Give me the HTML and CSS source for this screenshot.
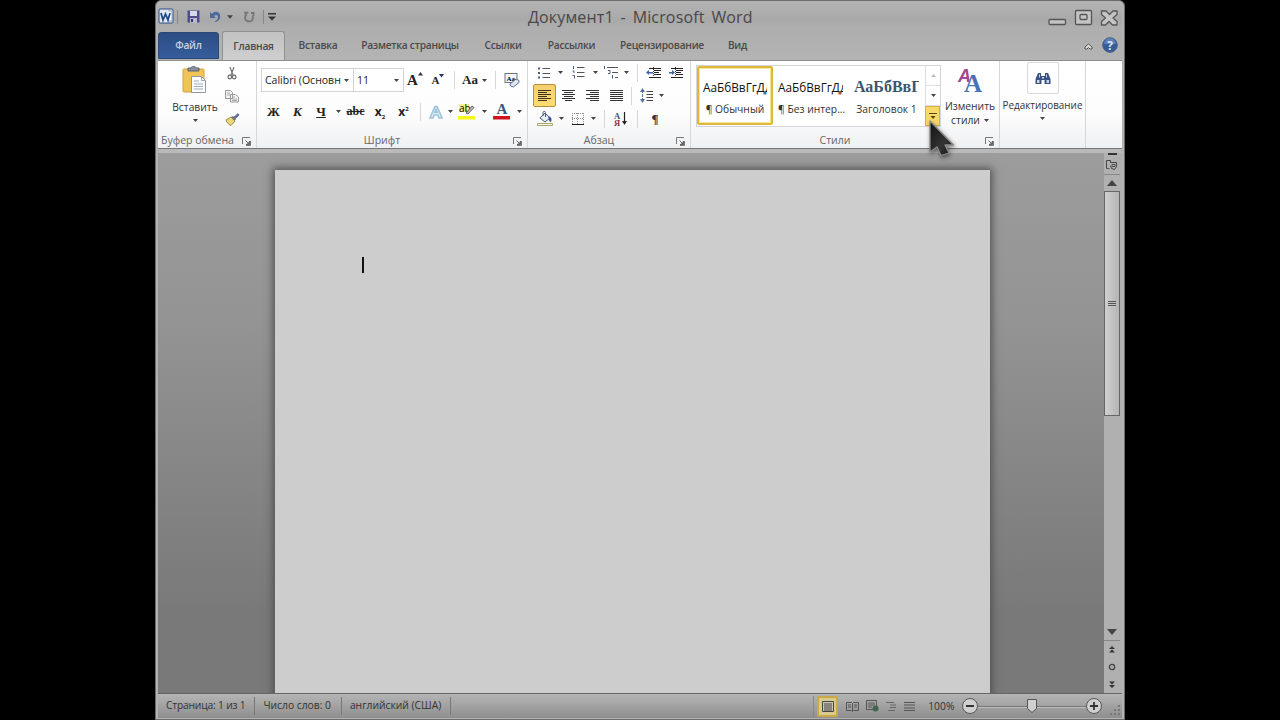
FILE: index.html
```html
<!DOCTYPE html>
<html lang="ru">
<head>
    <meta charset="utf-8">
    <title>Документ1 - Microsoft Word</title>
    <link rel="stylesheet" href="styles.css">
</head>
<body>
<svg class="defs">
    <symbol id="arrow" viewBox="0 0 5 3"><path d="M0 0h5L2.5 3z" fill="#444"/></symbol>
    <symbol id="launcher" viewBox="0 0 9 9"><path d="M.5 7V.5H8M4 8.500h4.500V4" fill="none" stroke="#777"/><path d="M3.500 3.500l4 4M7.500 4v3.500H4" stroke="#666" fill="#888"/></symbol>
</svg>

<div class="window">
    <div class="titlebar">
        <div class="quick">
            <svg width="17" height="17" viewBox="0 0 17 17"><rect x="1" y="1" width="14" height="14" rx="1" fill="#dfe8f2" stroke="#2e4f82"/><path d="M10 3h4v10h-4" fill="#fff" stroke="#8da3c0"/><path d="M3 5l2 7 2.500-6L10 12l2-7" fill="none" stroke="#1f4a8a" stroke-width="1.800"/></svg>
            <i class="qsep"></i>
            <svg class="save" width="13" height="13" viewBox="0 0 13 13"><path d="M.5.5h12v12h-12z" fill="#4f4c8c"/><path d="M3 1h7v5H3z" fill="#d6d9e8"/><path d="M3 8h7v5H3z" fill="#b9b9ce"/><path d="M4 9h2v3H4z" fill="#34316b"/></svg>
            <svg class="undo" width="12" height="12" viewBox="0 0 12 12"><path d="M1 1v6h6L5 5c2-2 4-1 4 1 0 2-2 4-4 5 4 0 7-3 6-7C10 0 5 0 3 3z" fill="#4d679f"/></svg>
            <svg class="dd" width="6" height="4"><use href="#arrow"/></svg>
            <svg class="redo" width="12" height="12" viewBox="0 0 12 12"><path d="M2.500 4C1 8 3 10.500 6 10.500S11 8 9.500 4.500M3 1v4.500M1 1.700h4.500M8 2h2.500v3" fill="none" stroke="#777" stroke-width="1.800"/></svg>
            <i class="qsep"></i>
            <svg width="8" height="8" viewBox="0 0 8 8"><path d="M0 0h8v1.500H0zM0 3.500h8L4 7.500z" fill="#333"/></svg>
        </div>
        <div class="title">Документ1 - Microsoft Word</div>
        <svg class="winbtns" width="71" height="18" viewBox="0 0 71 18">
            <g fill="#c4c4c4" stroke="#555" stroke-width="1.300">
                <rect x="1" y="10.500" width="16.500" height="5" rx="1"/>
                <rect x="27.500" y="1.500" width="16" height="14" rx="1"/>
                <rect x="32" y="5.500" width="7" height="5" rx="1"/>
                <path d="M53.500 2h4.500l3.500 3.500L65 2h4v3.500l-4 3.500 4 3.500V16h-4.500L61 12.500 57.500 16h-4v-3.500l4-3.500-4-3.500z" stroke-linejoin="round"/>
            </g>
        </svg>
    </div>

    <div class="tabs">
        <div class="tab file">Файл</div>
        <div class="tab active">Главная</div>
        <div class="tab t-ins">Вставка</div>
        <div class="tab t-lay">Разметка страницы</div>
        <div class="tab t-ref">Ссылки</div>
        <div class="tab t-mail">Рассылки</div>
        <div class="tab t-rev">Рецензирование</div>
        <div class="tab t-view">Вид</div>
        <svg class="collapse" width="9" height="7" viewBox="0 0 9 7"><path d="M1 4l3.500-3L8 4v2H6L4.500 4.500 3 6H1z" fill="#ddd" stroke="#555"/></svg>
        <svg class="help" width="16" height="16" viewBox="0 0 16 16"><circle cx="8" cy="8" r="7.300" fill="#355c98" stroke="#44608c"/><path d="M2 7a6 6 0 0 1 12 0z" fill="#5c80b4"/><text x="8" y="12.500" text-anchor="middle" class="q">?</text></svg>
    </div>

    <div class="ribbon">
        <div class="group clipboard">
            <div class="body">
                <div class="paste">
                    <svg width="26" height="28" viewBox="0 0 26 28"><rect x="1" y="3" width="21" height="23" rx="1" fill="#f0c457" stroke="#d5a43a"/><path d="M6 5V2h3c0-2 5-2 5 0h3v3z" fill="#8a8f98" stroke="#5d6470"/><path d="M9.500 10.500h10l4 4v12h-14z" fill="#fff" stroke="#8c97a8"/><path d="M19.500 10.500v4h4M12 15h5M12 18h9M12 20.500h9M12 23h9" fill="none" stroke="#9aa9bd"/></svg>
                    <span>Вставить</span>
                    <svg class="dd" width="5" height="3"><use href="#arrow"/></svg>
                </div>
                <div class="mini">
                    <svg width="10" height="13" viewBox="0 0 10 13"><path d="M3 0l3 8M7 0L4 8" stroke="#777" stroke-width="1.200"/><g fill="none" stroke="#666" stroke-width="1.200"><circle cx="2.800" cy="10" r="1.800"/><circle cx="7.200" cy="10" r="1.800"/></g></svg>
                    <svg width="16" height="13" viewBox="0 0 16 13"><g fill="#f4f4f4" stroke="#999"><path d="M1.500.5h5l2 2v6h-7zM6.500 4.500h5l3 2.500v5h-8z"/></g><path d="M3 3h3M3 5h3M8 7h3M8 9h5M8 10.500h5" stroke="#aaa"/></svg>
                    <svg width="15" height="13" viewBox="0 0 15 13"><path d="M1 7l5-3 4 4-4 4.500C4 12 2 10 1 7z" fill="#e9d77c" stroke="#a18d3f"/><path d="M6 4l2-1 3 3-1.500 2z" fill="#777"/><path d="M9 4l4-3.500L14 2l-3.500 3.500z" fill="#5d6fae" stroke="#41507f" stroke-width=".6"/></svg>
                </div>
            </div>
            <div class="caption"><span>Буфер обмена</span><svg width="9" height="9"><use href="#launcher"/></svg></div>
        </div>

        <div class="group font">
            <div class="body">
                <div class="row font-1">
                    <div class="combo">Calibri (Основн<svg width="5" height="3"><use href="#arrow"/></svg></div>
                    <div class="combo size">11<svg width="5" height="3"><use href="#arrow"/></svg></div>
                    <b class="serif grow">A<svg width="5" height="4" viewBox="0 0 5 4"><path d="M0 3.500L2.500 0 5 3.500z" fill="#335"/></svg></b>
                    <b class="serif shrink">A<svg width="5" height="4" viewBox="0 0 5 4"><path d="M0 0h5L2.500 3.500z" fill="#335"/></svg></b>
                    <i class="sep"></i>
                    <b class="serif case">Aa</b>
                    <svg width="5" height="3"><use href="#arrow"/></svg>
                    <i class="sep"></i>
                    <svg width="16" height="15" viewBox="0 0 16 15"><rect x="1" y=".5" width="12" height="9" fill="#f5f7fa" stroke="#66758c"/><text x="2.500" y="7.500" class="tiny">Aa</text><path d="M6 11l6-5 3 1.500v2L9.500 14 6.500 13z" fill="#dfe6f0" stroke="#5f7191"/></svg>
                </div>
                <div class="row font-2">
                    <b class="serif">Ж</b>
                    <b class="serif"><em>К</em></b>
                    <b class="serif"><u>Ч</u></b>
                    <svg width="5" height="3"><use href="#arrow"/></svg>
                    <b class="serif abc"><s>abc</s></b>
                    <b class="script">x<sub>2</sub></b>
                    <b class="script">x<sup>2</sup></b>
                    <i class="sep"></i>
                    <svg width="16" height="16" viewBox="0 0 16 16"><path d="M2 14L7 2.500h2L14 14h-3l-1-3H6l-1 3zM6.800 8.500h2.400L8 5.500z" fill="#eef6fb" stroke="#9cc4dc" stroke-width="1.700"/></svg>
                    <svg width="5" height="3"><use href="#arrow"/></svg>
                    <svg width="18" height="18" viewBox="0 0 18 18"><rect x="1" y="1" width="10" height="8" fill="#f4f48a"/><text x="1" y="9" class="ab">ab</text><path d="M8 10l6-7 2 1.500L10 11z" fill="#bbb" stroke="#444" stroke-width=".8"/><path d="M0 13h17v3.500H0z" fill="#f6f51c"/></svg>
                    <svg width="5" height="3"><use href="#arrow"/></svg>
                    <svg width="18" height="18" viewBox="0 0 18 18"><text x="9" y="11" text-anchor="middle" class="fontcolor">A</text><path d="M0 13h17v3.500H0z" fill="#cf1420"/></svg>
                    <svg width="5" height="3"><use href="#arrow"/></svg>
                </div>
            </div>
            <div class="caption center"><span>Шрифт</span><svg width="9" height="9"><use href="#launcher"/></svg></div>
        </div>

        <div class="group para">
            <div class="body">
                <div class="row para-1">
                    <svg width="13" height="12" viewBox="0 0 13 12"><path d="M0 .5h2v2H0zM0 5h2v2H0zM0 9.500h2v2H0z" fill="#4a5a86"/><path d="M4.500 1.500H12M4.500 6.500H12M4.500 10.500H12" stroke="#555"/></svg>
                    <svg width="5" height="3"><use href="#arrow"/></svg>
                    <svg width="13" height="13" viewBox="0 0 13 13"><path d="M1.500 0v3M.5 5h1.500v2M.5 9.500h2v3" stroke="#4a5a86" fill="none"/><path d="M5 1.500h7.500M5 6.500h7.500M5 10.500h7.500" stroke="#555"/></svg>
                    <svg width="5" height="3"><use href="#arrow"/></svg>
                    <svg width="16" height="13" viewBox="0 0 16 13"><path d="M1.500 0v3M5 4.500h2v3H5M9.500 9v3.500" stroke="#4a5a86" fill="none"/><path d="M4 1.500h11M9 6.500h6M12 11.500h3" stroke="#555"/></svg>
                    <svg width="5" height="3"><use href="#arrow"/></svg>
                    <i class="sep"></i>
                    <svg width="16" height="12" viewBox="0 0 16 12"><path d="M3 1.500h12M8 3.500h7M8 5.500h5M8 7.500h7M3 10.500h12" stroke="#222"/><path d="M0 5.500L3 3v2h4v1.500H3V8z" fill="#3f66a0"/><path d="M7.500 0v12" stroke="#333" stroke-dasharray="1 1"/></svg>
                    <svg width="16" height="12" viewBox="0 0 16 12"><path d="M3 1.500h12M8 3.500h7M8 5.500h5M8 7.500h7M3 10.500h12" stroke="#222"/><path d="M7 5.500L4 3v2H1v1.500h3V8z" fill="#3f66a0"/><path d="M7.500 0v12" stroke="#333" stroke-dasharray="1 1"/></svg>
                </div>
                <div class="row para-2">
                    <span class="pressed"><svg width="13" height="11" viewBox="0 0 13 11"><path d="M0 .5h13M0 2.500h9M0 4.500h13M0 6.500h9M0 8.500h13M0 10.500h9" stroke="#3a3320"/></svg></span>
                    <svg width="13" height="11" viewBox="0 0 13 11"><path d="M0 .5h13M2 2.500h9M0 4.500h13M2 6.500h9M0 8.500h13M3 10.500h7" stroke="#333"/></svg>
                    <svg width="13" height="11" viewBox="0 0 13 11"><path d="M0 .5h13M4 2.500h9M0 4.500h13M4 6.500h9M0 8.500h13M4 10.500h9" stroke="#333"/></svg>
                    <svg width="13" height="11" viewBox="0 0 13 11"><path d="M0 .5h13M0 2.500h13M0 4.500h13M0 6.500h13M0 8.500h13M0 10.500h13" stroke="#333"/></svg>
                    <i class="sep"></i>
                    <svg width="14" height="15" viewBox="0 0 14 15"><path d="M2.500 2v11" stroke="#5872a3" stroke-dasharray="3 1"/><path d="M0 4l2.500-4L5 4zM0 11l2.500 4L5 11z" fill="#5872a3"/><path d="M6.500 3.500H13M6.500 6.500H13M6.500 9.500H13M6.500 12.500H13" stroke="#444"/></svg>
                    <svg width="5" height="3"><use href="#arrow"/></svg>
                </div>
                <div class="row para-3">
                    <svg width="18" height="16" viewBox="0 0 18 16"><path d="M4 7l5-5 5 5-5 4z" fill="#e8edf5" stroke="#4b5a78"/><path d="M7 5V1.500c0-1.500 2.500-1.500 2.500 0V6" fill="none" stroke="#4b5a78"/><path d="M12 5c4 1 4 4 3 6-2 0-2-3-3-6z" fill="#34528c"/><path d="M1.500 12.500h15v2h-15z" fill="#fbfbea" stroke="#a9a86a"/></svg>
                    <svg width="5" height="3"><use href="#arrow"/></svg>
                    <svg width="12" height="12" viewBox="0 0 12 12"><path d="M.5 0v11M5.500 0v11M11.500 0v11M0 .5h12M0 5.500h12" stroke="#888" stroke-dasharray="1 1"/><path d="M0 11.500h12" stroke="#222"/></svg>
                    <svg width="5" height="3"><use href="#arrow"/></svg>
                    <i class="sep"></i>
                    <svg width="14" height="16" viewBox="0 0 14 16"><text x="0" y="7.500" class="sort blue">А</text><text x="0" y="15" class="sort red">Я</text><path d="M10.500 1v11" stroke="#222" stroke-width="1.200"/><path d="M8 10h5l-2.500 4z" fill="#222"/></svg>
                    <i class="sep"></i>
                    <span class="pilcrow">¶</span>
                </div>
            </div>
            <div class="caption center"><span>Абзац</span><svg width="9" height="9"><use href="#launcher"/></svg></div>
        </div>

        <div class="group styles">
            <div class="body">
                <div class="gallery">
                    <div class="style selected"><div class="sample">АаБбВвГгДд</div><div class="name">¶ Обычный</div></div>
                    <div class="style"><div class="sample">АаБбВвГгДд</div><div class="name">¶ Без интер...</div></div>
                    <div class="style"><div class="sample heading">АаБбВвГ</div><div class="name">Заголовок 1</div></div>
                    <div class="scroller">
                        <span class="off"><svg width="5" height="3" viewBox="0 0 5 3"><path d="M0 3h5L2.500 0z" fill="#bbb"/></svg></span>
                        <span><svg width="5" height="3"><use href="#arrow"/></svg></span>
                        <span class="more"><svg width="8" height="7" viewBox="0 0 8 7"><path d="M0 .5h8" stroke="#55450e"/><path d="M1.500 3h5L4 6z" fill="#55450e"/></svg></span>
                    </div>
                </div>
                <div class="big change">
                    <svg width="27" height="26" viewBox="0 0 27 26"><text x="1" y="15" class="a1">A</text><text x="7" y="25" class="a2">A</text></svg>
                    <span>Изменить</span>
                    <span>стили <svg width="5" height="3"><use href="#arrow"/></svg></span>
                </div>
            </div>
            <div class="caption center"><span>Стили</span><svg width="9" height="9"><use href="#launcher"/></svg></div>
        </div>

        <div class="group editing">
            <div class="big">
                <div class="iconbox"><svg width="16" height="13" viewBox="0 0 16 13"><path d="M3 1h3v3h4V1h3l2.500 6v5H9.500V8h-3v4H.5V7z" fill="#3c5280"/><path d="M2 8h2.500v3H2zM11.500 8H14v3h-2.500zM4 2.500h1v3H4zM11 2.500h1v3h-1zM7 5h2v1.500H7z" fill="#c9d5ea"/></svg></div>
                <span>Редактирование</span>
                <svg class="dd" width="5" height="3"><use href="#arrow"/></svg>
            </div>
        </div>
    </div>

    <div class="workspace">
        <div class="page"><i class="caret"></i></div>
        <div class="scrollbar">
            <i class="split"></i>
            <svg class="ruler" width="12" height="12" viewBox="0 0 12 12"><path d="M.5 9.500v-8h4v2h6v4l-2 3-3-1-1-3" fill="none" stroke="#444"/><path d="M.5 9.500h3M6 5.500h3v2H6z" fill="none" stroke="#555"/></svg>
            <div class="up"><svg width="10" height="6" viewBox="0 0 10 6"><path d="M0 6h10L5 0z" fill="#444"/></svg></div>
            <div class="thumb"><i></i><i></i><i></i></div>
            <div class="trough"></div>
            <div class="down"><svg width="10" height="6" viewBox="0 0 10 6"><path d="M0 0h10L5 6z" fill="#444"/></svg></div>
            <div class="browse">
                <svg width="6" height="7" viewBox="0 0 6 7"><path d="M0 3h6L3 0zM0 6.500h6L3 3.500z" fill="#333"/></svg>
                <svg width="8" height="8" viewBox="0 0 8 8"><circle cx="4" cy="4" r="2.700" fill="#aaa" stroke="#444" stroke-width="1.300"/></svg>
                <svg width="6" height="7" viewBox="0 0 6 7"><path d="M0 .5h6L3 3.500zM0 4h6L3 7z" fill="#333"/></svg>
            </div>
        </div>
    </div>

    <div class="statusbar">
        <div class="cell s-page">Страница: 1 из 1</div>
        <div class="cell s-words">Число слов: 0</div>
        <div class="cell s-lang">английский (США)</div>
        <div class="views">
            <span class="on"><svg width="12" height="11" viewBox="0 0 12 11"><path d="M.5.5h11v10H.5zM2 3h8M2 5h8M2 7h8M2 9h8" fill="#c9c6b4" stroke="#444"/></svg></span>
            <svg width="13" height="11" viewBox="0 0 13 11"><path d="M.5 1.500h5l1 1 1-1h5v8h-5l-1 1-1-1h-5zM6.500 2.500v8M2 4h3M2 6h3M8 4h3M8 6h3" fill="none" stroke="#555"/></svg>
            <svg width="13" height="12" viewBox="0 0 13 12"><path d="M.5.500h10v9H.5zM2 3h7M2 5h7M2 7h4" fill="none" stroke="#555"/><circle cx="9.500" cy="8.500" r="3" fill="#46644f"/></svg>
            <svg width="11" height="11" viewBox="0 0 11 11"><path d="M0 1.500h8M4 4h6M4 6.500h6M2 9.500h7" stroke="#666"/></svg>
            <svg width="11" height="11" viewBox="0 0 11 11"><path d="M0 1.500h11M0 4h11M0 7h11M0 9.500h11" stroke="#555"/></svg>
        </div>
        <div class="zoom">100%</div>
        <svg class="slider" width="142" height="18" viewBox="0 0 142 18"><path d="M16 9.500h110" stroke="#777"/><path d="M16 10.500h110" stroke="#bbb"/><g fill="#d0d0d0" stroke="#555"><circle cx="9" cy="9" r="7.500"/><circle cx="133" cy="9" r="7.500"/><path d="M66.500 2.500h9v9L71 15.500l-4.500-4z"/></g><path d="M5 9h8M129 9h8M133 5v8" stroke="#333" stroke-width="1.800"/></svg>
        <svg class="resize" width="12" height="12" viewBox="0 0 12 12"><path d="M8 1h2v2H8zM4 5h2v2H4zM8 5h2v2H8zM0 9h2v2H0zM4 9h2v2H4zM8 9h2v2H8z" fill="#777"/></svg>
    </div>

    <svg class="cursor" width="30" height="42" viewBox="0 0 30 42">
        <linearGradient id="ptr" x2="1" y2="1"><stop offset="0" stop-color="#111"/><stop offset=".6" stop-color="#333"/><stop offset="1" stop-color="#111"/></linearGradient>
        <path d="M2 2v31l7-5 4 8.500 8-2.500-4-8h8.500z" fill="url(#ptr)" stroke="#8a8a8a" stroke-width="1.300" stroke-linejoin="round"/>
    </svg>
</div>
</body>
</html>
```
FILE: styles.css
```css
* {
    margin: 0;
    padding: 0;
    box-sizing: border-box;
}
body {
    width: 1280px;
    height: 720px;
    overflow: hidden;
    background: #000;
    font-family: "Open Sans", "Noto Sans", sans-serif;
    font-size: 10.3px;
    color: #333;
}
svg {
    display: block;
    flex: none;
    overflow: visible;
}
.defs {
    display: none;
}
.window {
    position: relative;
    display: flex;
    flex-direction: column;
    width: 970px;
    height: 720px;
    margin: 0 auto;
    padding: 1px 2px 1px;
    border: 1px solid #6c6c70;
    border-radius: 6px 6px 0 0;
    background: #b2b2b2;
}

/* title bar */
.titlebar {
    display: flex;
    align-items: center;
    height: 29px;
    background: linear-gradient(#b4b4b4, #a9a9a9 60%, #b0b0b0);
}
.quick {
    display: flex;
    align-items: center;
    width: 370px;
    height: 26px;
}
.qsep {
    width: 1px;
    height: 14px;
    margin-left: 2px;
    background: #888;
}
.quick .save { margin-left: 9px; }
.quick .undo { margin-left: 9px; }
.quick .dd { margin-left: 6px; }
.quick .redo { margin: 0 6px 0 10px; }
.quick .qsep + svg:last-child { margin-left: 4px; }
.title {
    flex: 1;
    font-size: 16px;
    letter-spacing: 0.15px;
    word-spacing: 2.5px;
    color: #484848;
    white-space: nowrap;
}
.winbtns {
    margin: 2px 3px 0 0;
}

/* ribbon tabs */
.tabs {
    display: flex;
    height: 29px;
    background: linear-gradient(#aeaeae, #b4b4b4);
    font-size: 10.2px;
    font-weight: 600;
    letter-spacing: -0.25px;
    color: #4a4a4a;
}
.tab {
    height: 29px;
    line-height: 29px;
    text-align: center;
    white-space: nowrap;
}
.file {
    width: 61px;
    height: 27px;
    margin-top: 1px;
    line-height: 25px;
    border: 1px solid #284878;
    border-radius: 3px 3px 0 0;
    background: linear-gradient(#2c4d84, #365d9b);
    color: #c8d2e2;
}
.active {
    width: 63px;
    margin-left: 3px;
    line-height: 28px;
    border: 1px solid #909090;
    border-bottom: 0;
    border-radius: 3px 3px 0 0;
    background: linear-gradient(#c2c2c2, #cfcfcf);
}
.t-ins { width: 66px; }
.t-lay { width: 118px; }
.t-ref { width: 68px; }
.t-mail { width: 69px; }
.t-rev { width: 112px; }
.t-view { width: 39px; }
.collapse {
    margin: 12px 0 0 327px;
}
.help {
    margin: 6px 0 0 9px;
}
.q {
    font-size: 12px;
    font-weight: bold;
    fill: #dfe6ef;
}

/* ribbon */
.ribbon {
    display: flex;
    height: 89px;
    border-top: 1px solid #8f8f8f;
    border-bottom: 1px solid #777;
    background: linear-gradient(#fff, #fdfdfd 60%, #eff0f2);
}
.group {
    display: flex;
    flex-direction: column;
    border-right: 1px solid #d4d6d9;
}
.clipboard { width: 99px; }
.font { width: 271px; }
.para { width: 163px; }
.styles { width: 309px; }
.editing { width: 86px; }
.body {
    height: 71px;
}
.caption {
    display: flex;
    align-items: center;
    height: 16px;
    padding: 0 5px 0 3px;
    font-size: 10.5px;
    color: #666;
}
.caption span {
    flex: 1;
}
.caption svg {
    margin-top: 3px;
}
.center {
    text-align: center;
}
.center span {
    margin-right: 9px;
}
.clipboard .body {
    display: flex;
}
.paste {
    display: flex;
    flex-direction: column;
    align-items: center;
    width: 74px;
    padding-top: 5px;
}
.paste span {
    margin-top: 6px;
}
.paste .dd {
    margin-top: 5px;
}
.mini {
    display: flex;
    flex-direction: column;
    align-items: center;
    gap: 10px;
    padding-top: 6px;
    width: 0;
}
.row {
    display: grid;
    align-items: center;
    justify-items: center;
    height: 23px;
}
.font .body {
    padding: 7px 0 0 4px;
}
.font-1 {
    grid-template-columns: 92px 50px 24px 22px 11px 20px 9px 13px 19px;
}
.font-2 {
    grid-template-columns: 25px 23px 24px 10px 25px 24px 23px 10px 21px 8px 26px 9px 26px 8px;
    margin-top: 9px;
}
.para .body {
    padding-left: 4px;
}
.para-1 {
    grid-template-columns: 24px 9px 26px 8px 24px 6px 16px 18px 26px;
}
.para-2 {
    grid-template-columns: 24px 24px 24px 24px 7px 24px 5px;
}
.para-3 {
    grid-template-columns: 25px 8px 26px 5px 16px 18px 15px 20px;
}
.sep {
    width: 1px;
    height: 18px;
    background: #d5d7da;
}
.combo {
    display: flex;
    align-items: center;
    justify-content: space-between;
    width: 93px;
    height: 24px;
    margin-right: -1px;
    padding: 0 4px 0 3px;
    border: 1px solid #d0d2d6;
    background: #fff;
    color: #222;
    font-size: 10.5px;
    white-space: nowrap;
}
.size {
    width: 51px;
}
.serif {
    font-family: "Liberation Serif", serif;
    font-size: 13px;
    color: #222;
}
.grow, .shrink {
    display: flex;
    font-size: 15px;
}
.shrink {
    font-size: 11px;
}
.abc {
    font-size: 12px;
}
.script {
    font-size: 12px;
    line-height: 12px;
    color: #222;
}
.script sub, .script sup {
    font-size: 6px;
    line-height: 0;
}
.tiny {
    font: bold 7px "Liberation Serif", serif;
}
.ab {
    font: 10px "Open Sans", sans-serif;
}
.fontcolor {
    font: bold 15px "Liberation Serif", serif;
    fill: #3d557f;
}
.sort {
    font: bold 8.5px "Liberation Serif", serif;
}
.blue { fill: #3d4f77; }
.red { fill: #8e3434; }
.pilcrow {
    font: bold 13px "Liberation Serif", serif;
}
.pressed {
    display: flex;
    align-items: center;
    justify-content: center;
    width: 23px;
    height: 23px;
    border: 1px solid #b98f35;
    border-radius: 2px;
    background: linear-gradient(#f5cf6d, #fbdc72);
}

/* styles gallery */
.styles .body {
    display: flex;
    padding: 4px 0 0 5px;
}
.gallery {
    display: flex;
    width: 245px;
    height: 62px;
    border: 1px solid #d3d5d8;
    background: #fff;
}
.style {
    width: 76px;
    height: 59px;
    padding: 11px 6px 0 5px;
    text-align: center;
    white-space: nowrap;
}
.selected {
    padding: 9px 4px 0 4px;
    border: 2px solid #dcb83e;
    border-radius: 2px;
    box-shadow: inset 0 0 0 1px #f7e795;
}
.sample {
    height: 20px;
    overflow: hidden;
    font-size: 11.8px;
    line-height: 20px;
    text-align: left;
    color: #111;
}
.heading {
    font: bold 16px/20px "Liberation Serif", serif;
    color: #3b566f;
}
.name {
    margin-top: 4px;
    line-height: 16px;
}
.scroller {
    width: 15px;
}
.scroller span {
    display: flex;
    align-items: center;
    justify-content: center;
    height: 20px;
    border: 1px solid #dcdee1;
    border-width: 0 0 1px 1px;
}
.scroller .more {
    background: #f8d869;
    border: 1px solid #d9b13b;
}
.big {
    display: flex;
    flex-direction: column;
    align-items: center;
    line-height: 14px;
}
.big span {
    display: flex;
    align-items: center;
    gap: 4px;
}
.change {
    width: 58px;
    padding-top: 2px;
}
.change span:nth-child(2) {
    margin-top: 6px;
}
.a1, .a2 {
    font: italic bold 18px "Liberation Sans", sans-serif;
    fill: #a5458f;
}
.a2 {
    font: bold 25px "Liberation Serif", serif;
    fill: #4772b8;
}
.iconbox {
    display: flex;
    align-items: center;
    justify-content: center;
    width: 32px;
    height: 32px;
    margin: 1px 0 4px;
    border: 1px solid #d7d9dd;
    border-radius: 2px;
}
.editing span {
    font-size: 9.9px;
}
.editing .dd {
    margin-top: 5px;
}

/* document area */
.workspace {
    display: flex;
    justify-content: space-between;
    flex: 1;
    padding: 0 2px 0 117px;
    border-top: 4px solid #b9b9b9;
    background: linear-gradient(#9c9c9c, #949494 30%, #797979 85%);
    overflow: hidden;
}
.page {
    width: 715px;
    height: 540px;
    margin-top: 17px;
    padding: 87px 87px 0;
    background: #cdcdcd;
    box-shadow: 0 0 8px 2px #505050;
}
.caret {
    display: block;
    width: 2px;
    height: 16px;
    background: #111;
}
.scrollbar {
    display: flex;
    flex-direction: column;
    align-items: center;
    width: 16px;
    background: #b0b0b0;
    box-shadow: 2px 0 #b0b0b0;
}
.split {
    width: 9px;
    height: 2px;
    background: #333;
}
.ruler {
    margin: 4px 0 3px;
}
.up, .down {
    display: flex;
    align-items: center;
    justify-content: center;
    width: 16px;
    height: 17px;
    border-top: 1px solid #888;
}
.thumb {
    display: flex;
    flex-direction: column;
    align-items: center;
    justify-content: center;
    gap: 1px;
    width: 16px;
    height: 225px;
    border: 1px solid #666;
    background: linear-gradient(90deg, #d0d0d0, #b4b4b4);
}
.thumb i {
    width: 8px;
    height: 1px;
    background: #555;
}
.trough {
    flex: 1;
}
.down {
    border: 0;
    border-bottom: 1px solid #888;
}
.browse {
    display: flex;
    flex-direction: column;
    align-items: center;
    justify-content: space-around;
    height: 52px;
}

/* status bar */
.statusbar {
    display: flex;
    align-items: center;
    height: 25px;
    border-top: 1px solid #666;
    background: linear-gradient(#b5b5b5, #8e8e8e);
    white-space: nowrap;
}
.cell {
    height: 18px;
    line-height: 17px;
    padding-left: 8px;
    border-right: 1px solid #777;
}
.s-page {
    width: 98px;
    letter-spacing: -0.2px;
}
.s-words { width: 87px; }
.s-lang { width: 110px; }
.views {
    display: flex;
    align-items: center;
    gap: 8px;
    margin-left: 362px;
    padding-left: 3px;
    border-left: 1px solid #888;
}
.on {
    display: flex;
    align-items: center;
    justify-content: center;
    width: 21px;
    height: 21px;
    border: 2px solid #c8a945;
    border-radius: 2px;
    background: #d8cb92;
}
.views svg:nth-child(n+3) {
    margin-left: -1px;
}
.zoom {
    width: 33px;
    margin-left: 13px;
}
.resize {
    margin: 8px 0 0 7px;
}

.cursor {
    position: absolute;
    left: 772px;
    top: 118px;
    filter: drop-shadow(1px 2px 2px rgba(0, 0, 0, 0.5));
}
```
